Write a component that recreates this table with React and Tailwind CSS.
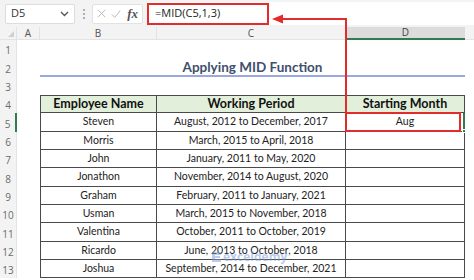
import React from "react";

const rows = [
  ["Steven", "August, 2012 to December, 2017", "Aug"],
  ["Morris", "March, 2015 to April, 2018", ""],
  ["John", "January, 2011 to May, 2020", ""],
  ["Jonathon", "November, 2014 to August, 2020", ""],
  ["Graham", "February, 2011 to January, 2021", ""],
  ["Usman", "March, 2015 to November, 2018", ""],
  ["Valentina", "October, 2011 to October, 2019", ""],
  ["Ricardo", "June, 2013 to October, 2018", ""],
  ["Joshua", "September, 2014 to December, 2021", ""],
];

const cellFont = { fontFamily: "Lato, 'Liberation Sans', sans-serif" };

function RowHeader({ n }) {
  const sel = n === 5;
  return (
    <div
      className={
        "flex items-center justify-center bg-[#f3f3f3] text-[10px] text-[#6b6b6b] pt-[3px] " +
        (sel ? "border-r-2 border-[#2e7d4f] text-[#2e6b46]" : "border-r border-[#e3e3e3]")
      }
    >
      {n}
    </div>
  );
}

export default function App() {
  return (
    <div
      className="relative w-[474px] h-[280px] overflow-hidden bg-white"
      style={{ fontFamily: "'Open Sans', 'Liberation Sans', sans-serif" }}
    >
      {/* Formula bar */}
      <div className="h-[27px] bg-[#f3f3f3] flex items-center">
        <div className="ml-[5px] w-[70px] h-[20px] bg-white border border-[#dcdcdc] rounded-[2px] flex items-center justify-between px-[5px]">
          <span className="text-[11px] text-[#333]">D5</span>
          <svg width="9" height="6" viewBox="0 0 9 6">
            <path d="M1 1 L4.5 4.5 L8 1" fill="none" stroke="#555" strokeWidth="1.3" />
          </svg>
        </div>
        <div className="w-[17px] flex flex-col items-center gap-[2px]">
          <span className="w-[2px] h-[2px] bg-[#9a9a9a] rounded-full"></span>
          <span className="w-[2px] h-[2px] bg-[#9a9a9a] rounded-full"></span>
          <span className="w-[2px] h-[2px] bg-[#9a9a9a] rounded-full"></span>
        </div>
        <div className="w-[51px] h-[20px] bg-white border border-[#e2e2e2] rounded-[2px] flex items-center px-[4px] gap-[5px]">
          <svg width="11" height="11" viewBox="0 0 11 11">
            <path d="M1 1 L10 10 M10 1 L1 10" stroke="#b5b5b5" strokeWidth="1.1" />
          </svg>
          <svg width="12" height="10" viewBox="0 0 12 10">
            <path d="M1 5.5 L4.5 9 L11 1" fill="none" stroke="#b5b5b5" strokeWidth="1.1" />
          </svg>
          <span
            className="text-[13px] italic font-bold text-[#555] leading-none ml-[1px]"
            style={{ fontFamily: "'Liberation Serif', serif" }}
          >
            fx
          </span>
        </div>
        <div className="ml-[4px] flex-1 h-[23px] bg-white self-end mb-[2px] flex items-center">
          <div className="w-[122px] h-[22px] border-2 border-[#e32b2b] flex items-center pl-[6px]">
            <span className="text-[11px] text-[#222]">=MID(C5,1,3)</span>
          </div>
        </div>
      </div>

      {/* Sheet grid */}
      <div className="grid grid-cols-[17px_23px_117px_189px_119px_9px] grid-rows-[13px_18px_19px_18px_18px_19px_18px_18px_19px_18px_18px_19px_18px_18px]">
        {/* Column headers */}
        <div className="bg-[#f3f3f3] border-r border-b border-[#e3e3e3] flex items-end justify-end p-[2px]">
          <svg width="6" height="6" viewBox="0 0 6 6">
            <path d="M6 0 L6 6 L0 6 Z" fill="#cfcfcf" />
          </svg>
        </div>
        <div className="bg-[#f3f3f3] border-r border-b border-[#e3e3e3] flex items-center justify-center text-[10px] text-[#555]">A</div>
        <div className="bg-[#f3f3f3] border-r border-b border-[#e3e3e3] flex items-center justify-center text-[10px] text-[#555]">B</div>
        <div className="bg-[#f3f3f3] border-r border-b border-[#e3e3e3] flex items-center justify-center text-[10px] text-[#555]">C</div>
        <div className="bg-[#dcdcdc] border-b-2 border-[#2e7d4f] flex items-center justify-center text-[10px] text-[#444]">D</div>
        <div className="bg-[#f3f3f3] border-b border-[#e3e3e3]"></div>

        {/* Row 1 */}
        <RowHeader n={1} />
        <div></div>
        <div className="col-span-3"></div>
        <div></div>

        {/* Row 2 title */}
        <RowHeader n={2} />
        <div></div>
        <div className="col-span-3 border-b-2 border-[#9aa8e0] flex items-center justify-center">
          <span
            className="text-[13.5px] font-bold text-[#3f4f6e] pt-[1px]"
            style={cellFont}
          >
            Applying MID Function
          </span>
        </div>
        <div></div>

        {/* Row 3 */}
        <RowHeader n={3} />
        <div></div>
        <div className="col-span-3"></div>
        <div></div>

        {/* Row 4 header */}
        <RowHeader n={4} />
        <div></div>
        {["Employee Name", "Working Period", "Starting Month"].map((h, i) => (
          <div
            key={h}
            className={
              "bg-[#e2efda] border-t border-r border-b border-[#4a4a4a] flex items-center justify-center text-[12.5px] font-bold text-[#111] " +
              (i === 0 ? "border-l" : "")
            }
            style={cellFont}
          >
            {h}
          </div>
        ))}
        <div></div>

        {rows.map((r, idx) => (
          <React.Fragment key={idx}>
            <RowHeader n={idx + 5} />
            <div></div>
            {r.map((c, i) => (
              <div
                key={i}
                className={
                  "border-r border-b border-[#4a4a4a] flex items-center justify-center text-[10.5px] text-[#222] " +
                  (i === 0 ? "border-l" : "")
                }
                style={cellFont}
              >
                {c}
              </div>
            ))}
            <div></div>
          </React.Fragment>
        ))}
      </div>

      {/* Selection of D5 */}
      <div className="absolute left-[463px] top-[113px] w-[2px] h-[19px] bg-[#2e7d4f]"></div>
      <div className="absolute left-[462px] top-[129px] w-[4px] h-[4px] bg-[#2e7d4f] border border-white"></div>

      {/* Red highlight of D5 */}
      <div className="absolute left-[345px] top-[112px] w-[116px] h-[20px] border-2 border-[#e32b2b]"></div>

      {/* Red arrow */}
      <svg className="absolute left-0 top-0" width="474" height="280" viewBox="0 0 474 280">
        <path d="M346 113 L346 19 L280 19" fill="none" stroke="#e32b2b" strokeWidth="2" />
        <path d="M272 19 L283 14.5 L283 23.5 Z" fill="#e32b2b" />
      </svg>

      {/* Watermark */}
      <div className="absolute left-[212px] top-[251px] flex items-center gap-[2px] opacity-50">
        <svg width="9" height="10" viewBox="0 0 9 10">
          <path d="M0 0 H9 V3 H3 V4 H8 V6 H3 V7 H9 V10 H0 Z" fill="#7c9bd6" />
        </svg>
        <span className="text-[12px] font-bold text-[#7c9bd6] leading-none" style={{ fontFamily: "'Open Sans', sans-serif" }}>
          exceldemy
        </span>
      </div>
    </div>
  );
}
